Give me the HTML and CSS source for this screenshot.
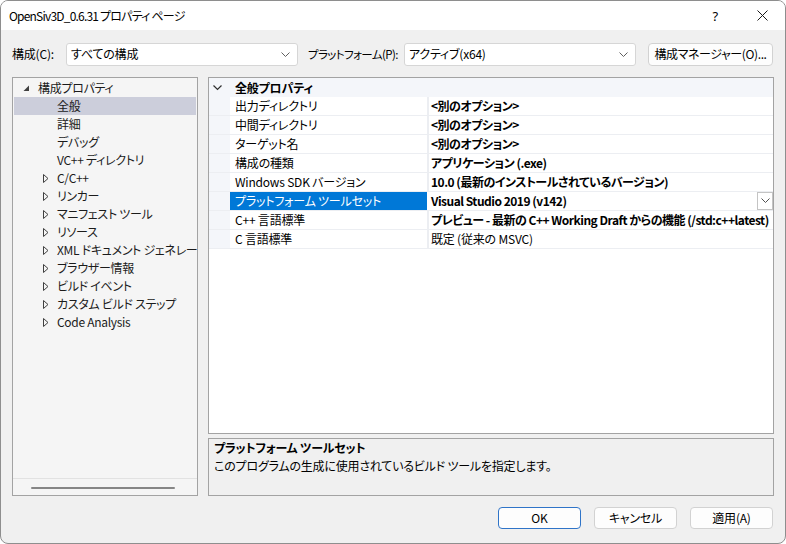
FILE: index.html
```html
<!DOCTYPE html>
<html lang="ja">
<head>
<meta charset="utf-8">
<link rel="stylesheet" href="styles.css">
</head>
<body>
<div class="window">
  <div class="titlebar">
    <span class="title">OpenSiv3D_0.6.31 プロパティ ページ</span>
    <span class="help">?</span>
    <svg class="close" width="11" height="11" viewBox="0 0 11 11"><path d="M0.5 0.5 L10.5 10.5 M10.5 0.5 L0.5 10.5" stroke="#1a1a1a" stroke-width="1" fill="none"/></svg>
  </div>

  <div class="toolbar">
    <span class="lbl lbl1">構成(C):</span>
    <div class="combo"><span>すべての構成</span><svg class="chev" width="9" height="5" viewBox="0 0 9 5"><path d="M0.5 0.5 L4.5 4.5 L8.5 0.5" stroke="#606060" fill="none"/></svg></div>
    <span class="lbl lbl2">プラットフォーム(P):</span>
    <div class="combo"><span>アクティブ(x64)</span><svg class="chev" width="9" height="5" viewBox="0 0 9 5"><path d="M0.5 0.5 L4.5 4.5 L8.5 0.5" stroke="#606060" fill="none"/></svg></div>
    <div class="btn cfgmgr">構成マネージャー(O)...</div>
  </div>

  <div class="main">
    <div class="tree">
      <div class="tree-items">
        <div class="ti l0"><span class="exp"><svg width="7" height="7" viewBox="0 0 7 7"><path d="M6 0.5 L6 6 L0.5 6 Z" fill="#404040"/></svg></span>構成プロパティ</div>
        <div class="ti l1 sel"><span class="exp"></span>全般</div>
        <div class="ti l1"><span class="exp"></span>詳細</div>
        <div class="ti l1"><span class="exp"></span>デバッグ</div>
        <div class="ti l1"><span class="exp"></span>VC++ ディレクトリ</div>
        <div class="ti l1"><span class="exp"><svg class="tri" width="6" height="9" viewBox="0 0 6 9"><path d="M0.5 0.5 L5 4.5 L0.5 8.5 Z" stroke="#404040" fill="none"/></svg></span>C/C++</div>
        <div class="ti l1"><span class="exp"><svg class="tri" width="6" height="9" viewBox="0 0 6 9"><path d="M0.5 0.5 L5 4.5 L0.5 8.5 Z" stroke="#404040" fill="none"/></svg></span>リンカー</div>
        <div class="ti l1"><span class="exp"><svg class="tri" width="6" height="9" viewBox="0 0 6 9"><path d="M0.5 0.5 L5 4.5 L0.5 8.5 Z" stroke="#404040" fill="none"/></svg></span>マニフェスト ツール</div>
        <div class="ti l1"><span class="exp"><svg class="tri" width="6" height="9" viewBox="0 0 6 9"><path d="M0.5 0.5 L5 4.5 L0.5 8.5 Z" stroke="#404040" fill="none"/></svg></span>リソース</div>
        <div class="ti l1"><span class="exp"><svg class="tri" width="6" height="9" viewBox="0 0 6 9"><path d="M0.5 0.5 L5 4.5 L0.5 8.5 Z" stroke="#404040" fill="none"/></svg></span>XML ドキュメント ジェネレーター</div>
        <div class="ti l1"><span class="exp"><svg class="tri" width="6" height="9" viewBox="0 0 6 9"><path d="M0.5 0.5 L5 4.5 L0.5 8.5 Z" stroke="#404040" fill="none"/></svg></span>ブラウザー情報</div>
        <div class="ti l1"><span class="exp"><svg class="tri" width="6" height="9" viewBox="0 0 6 9"><path d="M0.5 0.5 L5 4.5 L0.5 8.5 Z" stroke="#404040" fill="none"/></svg></span>ビルド イベント</div>
        <div class="ti l1"><span class="exp"><svg class="tri" width="6" height="9" viewBox="0 0 6 9"><path d="M0.5 0.5 L5 4.5 L0.5 8.5 Z" stroke="#404040" fill="none"/></svg></span>カスタム ビルド ステップ</div>
        <div class="ti l1"><span class="exp"><svg class="tri" width="6" height="9" viewBox="0 0 6 9"><path d="M0.5 0.5 L5 4.5 L0.5 8.5 Z" stroke="#404040" fill="none"/></svg></span>Code Analysis</div>
      </div>
      <div class="hscroll"><div class="thumb"></div></div>
    </div>

    <div class="right">
      <div class="grid">
        <div class="cat"><svg class="catchev" width="9" height="6" viewBox="0 0 9 6"><path d="M0.5 0.5 L4.5 4.5 L8.5 0.5" stroke="#303030" stroke-width="1.2" fill="none"/></svg><span>全般プロパティ</span></div>
        <div class="row"><div class="gutter"></div><div class="name">出力ディレクトリ</div><div class="val b">&lt;別のオプション&gt;</div></div>
        <div class="row"><div class="gutter"></div><div class="name">中間ディレクトリ</div><div class="val b">&lt;別のオプション&gt;</div></div>
        <div class="row"><div class="gutter"></div><div class="name">ターゲット名</div><div class="val b">&lt;別のオプション&gt;</div></div>
        <div class="row"><div class="gutter"></div><div class="name">構成の種類</div><div class="val b">アプリケーション (.exe)</div></div>
        <div class="row"><div class="gutter"></div><div class="name">Windows SDK バージョン</div><div class="val b">10.0 (最新のインストールされているバージョン)</div></div>
        <div class="row selrow"><div class="gutter"></div><div class="name sel">プラットフォーム ツールセット</div><div class="val b"><span>Visual Studio 2019 (v142)</span><span class="ddbtn"><svg width="9" height="5" viewBox="0 0 9 5"><path d="M0.5 0.5 L4.5 4.5 L8.5 0.5" stroke="#505050" fill="none"/></svg></span></div></div>
        <div class="row"><div class="gutter"></div><div class="name">C++ 言語標準</div><div class="val b">プレビュー - 最新の C++ Working Draft からの機能 (/std:c++latest)</div></div>
        <div class="row"><div class="gutter"></div><div class="name">C 言語標準</div><div class="val">既定 (従来の MSVC)</div></div>
      </div>
      <div class="desc">
        <div class="desc-title">プラットフォーム ツールセット</div>
        <div class="desc-text">このプログラムの生成に使用されているビルド ツールを指定します。</div>
      </div>
    </div>
  </div>

  <div class="buttons">
    <div class="btn ok">OK</div>
    <div class="btn">キャンセル</div>
    <div class="btn">適用(A)</div>
  </div>
</div>
</body>
</html>
```

FILE: styles.css
```css
html, body {
  margin: 0;
  padding: 0;
  background: #ffffff;
}

body {
  font-family: "Noto Sans CJK JP", "Noto Sans", sans-serif;
  font-size: 12px;
  font-feature-settings: "palt";
  letter-spacing: -0.2px;
  color: #000;
}

.window {
  width: 786px;
  height: 544px;
  box-sizing: border-box;
  border: 1px solid #8e8e8e;
  border-radius: 8px;
  background: #f0f0f0;
  overflow: hidden;
  display: flex;
  flex-direction: column;
}

/* title bar */
.titlebar {
  height: 29px;
  flex: none;
  background: #ffffff;
  display: flex;
  align-items: center;
  padding-left: 8px;
}
.title {
  line-height: 16px;
  flex: 1;
  letter-spacing: -0.8px;
  white-space: nowrap;
}
.help {
  font-family: "Noto Sans", sans-serif;
  font-size: 13px;
  line-height: 16px;
  margin-right: 39px;
}
.close {
  margin-right: 17px;
}

/* toolbar */
.toolbar {
  flex: none;
  margin-top: 12px;
  height: 24px;
  display: flex;
  align-items: center;
  padding-left: 11px;
}
.lbl {
  line-height: 16px;
  white-space: nowrap;
  flex: none;
}
.lbl1 { width: 54px; }
.lbl2 { width: 96px; margin-left: 10px; font-size: 11.5px; letter-spacing: -0.6px; }
.combo {
  width: 232px;
  height: 23px;
  flex: none;
  box-sizing: border-box;
  background: #fff;
  border: 1px solid #d6d6d6;
  border-radius: 3px;
  display: flex;
  align-items: center;
  justify-content: space-between;
  padding: 0 7px 0 4px;
  line-height: 16px;
}
.chev { display: block; }

.btn {
  width: 83px;
  height: 22px;
  flex: none;
  box-sizing: border-box;
  background: #fdfdfd;
  border: 1px solid #d2d2d2;
  border-radius: 4px;
  display: flex;
  align-items: center;
  justify-content: center;
  line-height: 16px;
}
.cfgmgr {
  width: 125px;
  height: 23px;
  margin-left: 12px;
  white-space: nowrap;
  letter-spacing: -0.4px;
}
.btn.ok {
  border-color: #2f74c8;
}

/* main */
.main {
  flex: none;
  margin-top: 11px;
  display: flex;
  padding-left: 11px;
  gap: 10px;
}

.tree {
  width: 186px;
  height: 419px;
  box-sizing: border-box;
  border: 1px solid #a3a3a3;
  background: #f5f5f5;
  display: flex;
  flex-direction: column;
}
.tree-items {
  flex: 1;
  overflow: hidden;
  padding-top: 1px;
}
.ti {
  height: 18px;
  line-height: 18px;
  display: flex;
  align-items: center;
  white-space: nowrap;
  margin: 0 1px;
  color: #1b1b1b;
  letter-spacing: -0.3px;
}
.ti.l0 { padding-left: 9px; }
.ti.l1 { padding-left: 29px; }
.ti.l0 .exp { width: 15px; }
.ti.l1 .exp { width: 14px; }
.exp {
  flex: none;
  display: flex;
  align-items: center;
  height: 18px;
}
.exp svg { display: block; }
.ti.sel { background: #cccedb; }

.hscroll {
  flex: none;
  height: 16px;
  border-top: 1px solid #e2e2e2;
  display: flex;
  align-items: center;
  padding-left: 18px;
}
.thumb {
  width: 144px;
  height: 2px;
  border-radius: 1px;
  background: #868686;
  margin-top: 1px;
}

.right {
  width: 566px;
  display: flex;
  flex-direction: column;
  gap: 4px;
}

.grid {
  height: 357px;
  box-sizing: border-box;
  border: 1px solid #a3a3a3;
  background: #ffffff;
}
.cat {
  height: 19px;
  background: #f4f6fa;
  display: flex;
  align-items: center;
  font-weight: bold;
  line-height: 16px;
}
.catchev {
  display: block;
  margin-left: 4px;
  margin-right: 13px;
}
.row {
  height: 19px;
  display: flex;
  box-sizing: border-box;
  border-bottom: 1px solid #eceef2;
  line-height: 18px;
}
.gutter {
  width: 21px;
  flex: none;
  background: #f4f6fa;
}
.name {
  width: 199px;
  flex: none;
  box-sizing: border-box;
  padding-left: 5px;
  border-right: 2px solid #eceef2;
  white-space: nowrap;
  overflow: hidden;
}
.name.sel {
  background: #0078d7;
  color: #ffffff;
  border-right-color: #ffffff;
}
.val {
  flex: 1;
  padding-left: 2px;
  white-space: nowrap;
  overflow: hidden;
  display: flex;
  align-items: center;
}
.val.b { font-weight: bold; letter-spacing: -0.5px; }
.ddbtn {
  margin-left: auto;
  width: 16px;
  height: 18px;
  flex: none;
  box-sizing: border-box;
  border: 1px solid #c4c4c4;
  background: #fff;
  display: flex;
  align-items: center;
  justify-content: center;
  margin-top: -1px;
}
.ddbtn svg { display: block; }

.desc {
  height: 58px;
  box-sizing: border-box;
  border: 1px solid #a3a3a3;
  background: #f0f0f0;
  padding: 0 5px;
  line-height: 18px;
}
.desc-title { font-weight: bold; }

.buttons {
  flex: none;
  margin-top: 11px;
  display: flex;
  justify-content: flex-end;
  gap: 13px;
  padding-right: 12px;
}
```
